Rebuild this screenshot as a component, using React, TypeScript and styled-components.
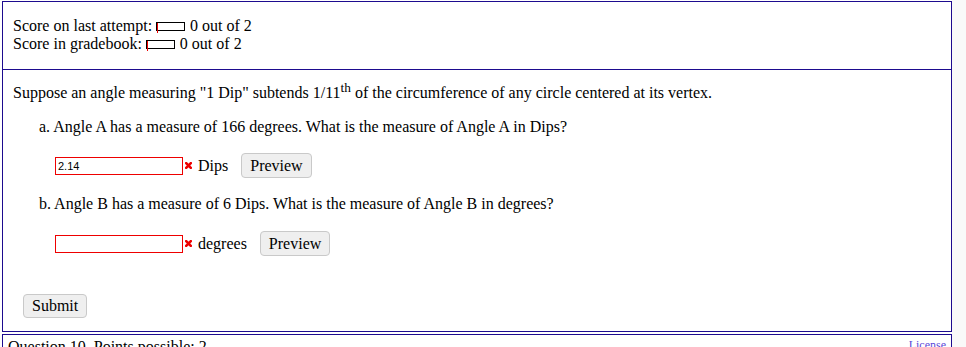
import React from "react";
import styled, { createGlobalStyle } from "styled-components";

const Global = createGlobalStyle`
  html, body { margin: 0; padding: 0; background: #f9f9f9; }
  body { font-family: "Liberation Serif", "Times New Roman", serif; font-size: 16px; color: #000; }
`;

const Page = styled.div`
  width: 952px;
  background: #fff;
  padding-top: 1px;
  min-height: 347px;
  box-sizing: border-box;
`;

const Box = styled.div`
  margin-left: 2px;
  width: 950px;
  box-sizing: border-box;
  border: 1px solid #1d0b8f;
`;

const NextBox = styled(Box)`
  margin-top: 2px;
  display: flex;
  justify-content: space-between;
  align-items: flex-start;
  padding: 3px 5px 0 5px;
  height: 20px;
  overflow: hidden;
`;

const Header = styled.div`
  padding: 15px 10px 16px;
  line-height: 18px;
  border-bottom: 1px solid #1d0b8f;
`;

const ScoreLine = styled.div`
  display: flex;
  align-items: center;
  white-space: pre;
`;

const ScoreBar = styled.span`
  position: relative;
  display: inline-block;
  width: 27px;
  height: 7px;
  border: 1px solid #000;
  margin: 0 5px 0 4px;
`;

const ScoreMark = styled.span`
  position: absolute;
  left: 0;
  top: 0;
  width: 1px;
  height: 10px;
  background: #e00;
`;

const Body = styled.div`
  padding: 14px 10px 13px;
  line-height: 18px;
`;

const Para = styled.div<{ $indent?: number; $top?: number }>`
  padding-left: ${(p) => p.$indent ?? 0}px;
  margin-top: ${(p) => p.$top ?? 0}px;
`;

const AnswerRow = styled.div<{ $top: number }>`
  display: flex;
  align-items: center;
  margin-top: ${(p) => p.$top}px;
  padding-left: 42px;
  height: 25px;
`;

const AnswerInput = styled.input`
  box-sizing: border-box;
  width: 128px;
  height: 18px;
  border: 1px solid #e00;
  padding: 0 2px;
  margin: 0;
  font-family: "Liberation Sans", Arial, sans-serif;
  font-size: 11px;
  color: #000;
  outline: none;
`;

const WrongMark = styled.svg`
  margin-left: 2px;
  margin-right: 6px;
  flex: none;
`;

const Unit = styled.span`
  margin-right: 13px;
`;

const Button = styled.button<{ $h?: number }>`
  box-sizing: border-box;
  height: ${(p) => p.$h ?? 24}px;
  padding: 0 8px;
  font-family: "Liberation Serif", "Times New Roman", serif;
  font-size: 16px;
  color: #000;
  background: #efefef;
  border: 1px solid #c9c9c9;
  border-radius: 4px;
  line-height: 1;
`;

const SubmitRow = styled.div`
  margin-top: 38px;
  padding-left: 10px;
  display: flex;
`;

const NextTitle = styled.span`
  line-height: 18px;
`;

const License = styled.a`
  font-family: "Liberation Serif", "Times New Roman", serif;
  font-size: 12px;
  line-height: 14px;
  color: #5a48d8;
  text-decoration: none;
  margin-top: 0;
`;

const Cross = () => (
  <WrongMark width="7" height="7" viewBox="0 0 7 7">
    <path d="M1.2 1.2 L5.8 5.8 M5.8 1.2 L1.2 5.8" stroke="#e00" strokeWidth="2.6" strokeLinecap="square" />
  </WrongMark>
);

export default function App() {
  return (
    <>
      <Global />
      <Page>
        <Box>
          <Header>
            <ScoreLine>
              Score on last attempt:
              <ScoreBar>
                <ScoreMark />
              </ScoreBar>
              0 out of 2
            </ScoreLine>
            <ScoreLine>
              Score in gradebook:
              <ScoreBar>
                <ScoreMark />
              </ScoreBar>
              0 out of 2
            </ScoreLine>
          </Header>
          <Body>
            <Para>
              Suppose an angle measuring "1 Dip" subtends 1/11<sup style={{ lineHeight: 0 }}>th</sup> of the
              circumference of any circle centered at its vertex.
            </Para>
            <Para $indent={26} $top={16}>
              a. Angle A has a measure of 166 degrees. What is the measure of Angle A in Dips?
            </Para>
            <AnswerRow $top={17}>
              <AnswerInput defaultValue="2.14" />
              <Cross />
              <Unit>Dips</Unit>
              <Button $h={25}>Preview</Button>
            </AnswerRow>
            <Para $indent={26} $top={17}>
              b. Angle B has a measure of 6 Dips. What is the measure of Angle B in degrees?
            </Para>
            <AnswerRow $top={18}>
              <AnswerInput defaultValue="" />
              <Cross />
              <Unit>degrees</Unit>
              <Button $h={25}>Preview</Button>
            </AnswerRow>
            <SubmitRow>
              <Button>Submit</Button>
            </SubmitRow>
          </Body>
        </Box>
        <NextBox>
          <NextTitle>Question 10. Points possible: 2</NextTitle>
          <License href="#">License</License>
        </NextBox>
      </Page>
    </>
  );
}
